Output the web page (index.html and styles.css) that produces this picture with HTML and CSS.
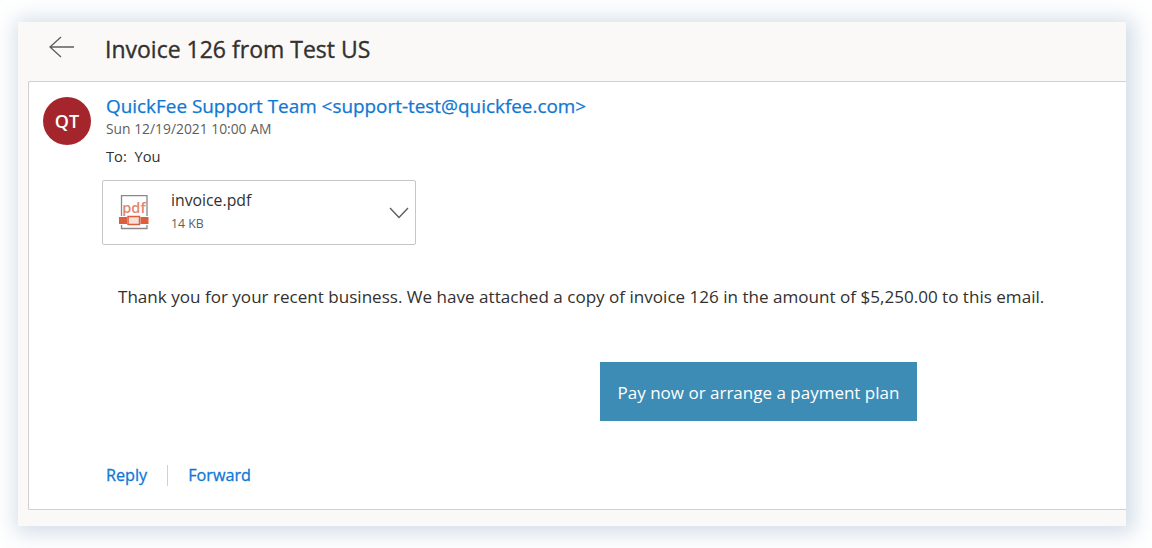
FILE: index.html
```html
<!DOCTYPE html>
<html lang="en">
<head>
    <meta charset="UTF-8">
    <meta name="viewport" content="width=device-width, initial-scale=1.0">
    <title>Invoice 126 from Test US</title>
    <link rel="stylesheet" href="styles.css">
</head>
<body>
    <div class="window">
        <header class="subject-bar">
            <svg class="back-icon" width="26" height="22" viewBox="0 0 26 22" fill="none" stroke="#605e5c" stroke-width="1.3">
                <path d="M13 1 L2 11 L13 21 M2 11 H26"/>
            </svg>
            <h1>Invoice 126 from Test US</h1>
        </header>

        <div class="message">
            <div class="sender">
                <div class="avatar">QT</div>
                <div class="sender-info">
                    <a class="sender-name">QuickFee Support Team &lt;support-test@quickfee.com&gt;</a>
                    <div class="sent-date">Sun 12/19/2021 10:00 AM</div>
                    <div class="recipients">To:&nbsp; You</div>
                </div>
            </div>

            <div class="attachment">
                <svg class="pdf-icon" width="30" height="35" viewBox="0 0 30 35" fill="none">
                    <path d="M2.500 .500 H28 V33.500 H2.500 Z" stroke="#8a8886" stroke-width="1.300"/>
                    <rect x="0" y="21" width="30" height="9" fill="#fff"/>
                    <rect x="0" y="22" width="8" height="7" fill="#dc5e3c"/>
                    <rect x="21.500" y="22" width="8" height="7" fill="#dc5e3c"/>
                    <rect x="9" y="21.500" width="11.500" height="8" fill="#f8e0d8" stroke="#dc5e3c" stroke-width="1.500"/>
                    <text class="pdf-label" x="15" y="18" text-anchor="middle">pdf</text>
                </svg>
                <div class="file-info">
                    <div class="file-name">invoice.pdf</div>
                    <div class="file-size">14 KB</div>
                </div>
                <svg class="chevron" width="20" height="12" viewBox="0 0 20 12" fill="none" stroke="#605e5c" stroke-width="1.400">
                    <path d="M1 1 L10 10.500 L19 1"/>
                </svg>
            </div>

            <p class="body-text">Thank you for your recent business. We have attached a copy of invoice 126 in the amount of $5,250.00 to this email.</p>

            <div class="pay-row">
                <a class="pay-button">Pay now or arrange a payment plan</a>
            </div>

            <div class="actions">
                <a class="action">Reply</a>
                <span class="divider"></span>
                <a class="action">Forward</a>
            </div>
        </div>
    </div>
</body>
</html>
```

FILE: styles.css
```css
html, body {
    height: 100%;
}
body {
    margin: 0;
    overflow: hidden;
    background-color: #fff;
    font-family: 'Open Sans', 'Noto Sans', sans-serif;
    color: #323130;
}
a {
    text-decoration: none;
}
.window {
    box-sizing: border-box;
    display: flex;
    flex-direction: column;
    width: 1108px;
    height: 504px;
    margin: 0 0 0 18px;
    position: relative;
    top: 22px;
    padding: 0 0 16px 10px;
    background-color: #faf9f8;
    box-shadow: 3px 2px 20px 5px rgba(165, 188, 210, 0.5);
}
.subject-bar {
    display: flex;
    align-items: center;
    height: 59px;
    flex-shrink: 0;
    padding-left: 20px;
}
.back-icon {
    margin-right: 31px;
    margin-top: -9px;
}
.subject-bar h1 {
    margin: 0 0 6px;
    font-size: 23px;
    font-weight: 400;
    -webkit-text-stroke: 0.35px #323130;
    color: #323130;
}
.message {
    flex: 1;
    display: flex;
    flex-direction: column;
    background-color: #fff;
    border: 1px solid #d2d0ce;
    border-right: none;
    border-radius: 2px 0 0 2px;
    padding: 15px 0 0 14px;
}
.sender {
    display: flex;
    gap: 15px;
}
.avatar {
    width: 48px;
    height: 48px;
    border-radius: 50%;
    background-color: #a4262c;
    color: #fff;
    font-size: 18px;
    font-weight: 600;
    line-height: 48px;
    text-align: center;
}
.sender-name {
    display: block;
    margin-top: -1px;
    font-size: 18.900px;
    line-height: 20px;
    -webkit-text-stroke: 0.25px #0f78d4;
    color: #0f78d4;
}
.sent-date {
    margin-top: 4px;
    font-size: 13.850px;
    line-height: 18px;
    color: #605e5c;
}
.recipients {
    margin-top: 8px;
    font-size: 14.700px;
    line-height: 20px;
}
.attachment {
    box-sizing: border-box;
    display: flex;
    align-items: center;
    width: 314px;
    height: 65px;
    margin: 14px 0 0 59px;
    padding: 0 6px 0 16px;
    border: 1px solid #c8c6c4;
    border-radius: 2px;
}
.pdf-label {
    font-family: 'Open Sans', sans-serif;
    font-size: 14.500px;
    font-weight: 600;
    fill: #e0876e;
}
.file-info {
    flex: 1;
    margin: -5px 0 0 22px;
}
.file-name {
    font-size: 15.800px;
    line-height: 22px;
}
.file-size {
    margin-top: 5px;
    font-size: 12.300px;
    line-height: 16px;
    color: #605e5c;
}
.body-text {
    margin: 41px 0 0 75px;
    font-size: 17.070px;
    line-height: 22px;
}
.pay-row {
    margin: 54px 0 0 557px;
}
.pay-button {
    display: block;
    width: 317px;
    height: 59px;
    background-color: #3c8cb5;
    color: #fff;
    font-size: 17px;
    line-height: 62px;
    text-align: center;
}
.actions {
    display: flex;
    align-items: center;
    margin: 43px 0 0 63px;
}
.action {
    font-size: 16.200px;
    line-height: 22px;
    -webkit-text-stroke: 0.3px #0f78d4;
    color: #0f78d4;
}
.divider {
    width: 1px;
    height: 21px;
    margin: 0 20px 0 20px;
    background-color: #d2d0ce;
}
```
